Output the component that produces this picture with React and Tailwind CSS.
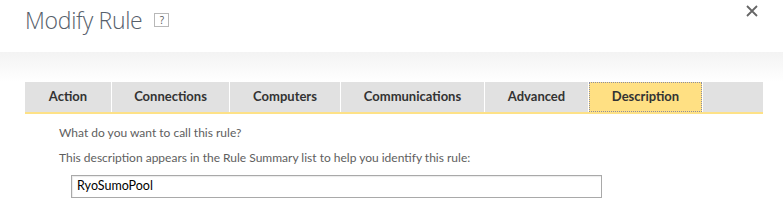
import React from 'react';

const tabs = [
  { label: 'Action', w: 'w-[86px]' },
  { label: 'Connections', w: 'w-[117px]' },
  { label: 'Computers', w: 'w-[110px]' },
  { label: 'Communications', w: 'w-[143px]' },
  { label: 'Advanced', w: 'w-[103px]' },
  { label: 'Description', w: 'w-[113px]', active: true },
];

export default function App() {
  return (
    <div className="relative w-[783px] h-[218px] bg-white overflow-hidden font-['Open_Sans',sans-serif]">
      {/* header */}
      <div className="h-[52px] flex items-start pl-[25px] pt-[7px] gap-[12px]">
        <h1 className="text-[23px] font-light text-[#56606b] leading-[26px] tracking-[-0.3px]">Modify Rule</h1>
        <span className="mt-[6px] w-[15px] h-[14px] border border-[#b8b8b8] flex items-center justify-center text-[10px] text-[#555] leading-none">?</span>
      </div>
      <button className="absolute top-[4px] right-[24px] w-[13px] h-[13px] text-[#666]">
        <svg viewBox="0 0 12 12" className="w-[12px] h-[12px]">
          <path d="M1 1 L11 11 M11 1 L1 11" stroke="currentColor" strokeWidth="1.8" />
        </svg>
      </button>

      {/* gradient band */}
      <div className="h-[30px] bg-gradient-to-b from-[#f3f3f3] to-white" />

      {/* tabs */}
      <div className="ml-[25px] w-[738px] flex h-[32px] border-b-2 border-[#fde187]">
        {tabs.map((t) => (
          <div
            key={t.label}
            className={`${t.w} mr-[1px] flex items-center justify-center font-['Lato',sans-serif] text-[13px] font-bold text-[#333] ${
              t.active ? 'bg-[#ffe083] border border-dotted border-[#8c8ca0]' : 'bg-[#e1e1e1]'
            }`}
          >
            {t.label}
          </div>
        ))}
        <div className="flex-1 bg-[#e1e1e1]" />
      </div>

      {/* body */}
      <div className="pl-[59px] pt-[10px] font-['Lato',sans-serif] text-[12px] text-[#5e5e5e]">
        <p className="h-[18px] leading-[18px]">What do you want to call this rule?</p>
        <p className="mt-[7px] h-[18px] leading-[18px]">This description appears in the Rule Summary list to help you identify this rule:</p>
        <div className="ml-[12px] mt-[8px] w-[531px] h-[23px] border border-[#a9a9a9] shadow-[inset_1px_1px_1px_rgba(0,0,0,0.08)] flex items-center px-[5px] text-[12.5px] text-black">
          RyoSumoPool
        </div>
      </div>
    </div>
  );
}
